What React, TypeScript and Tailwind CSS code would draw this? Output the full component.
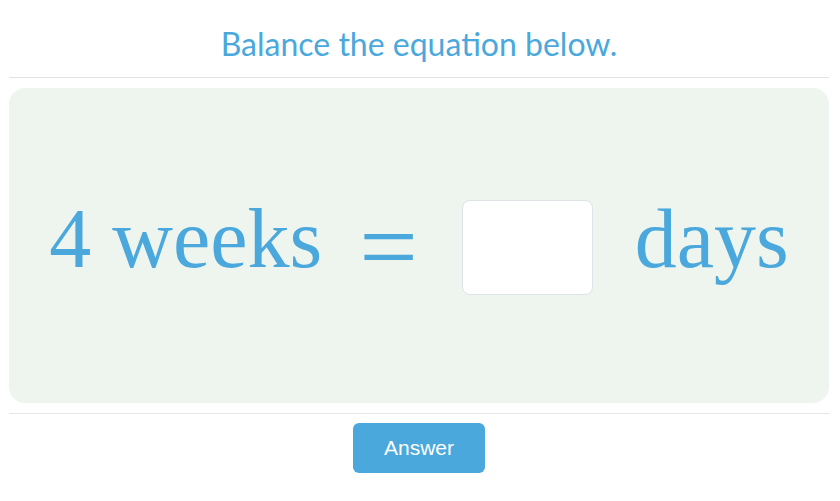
export default function App() {
  return (
    <div className="w-[840px] h-[501px] bg-white flex flex-col items-center">
      <div className="w-[820px] ml-[-2px] flex flex-col">
        <h1 className="h-[77px] pt-[26px] text-center text-[32px] leading-[36px] text-[#4aa8dc] font-['Lato',sans-serif]">
          Balance the equation below.
        </h1>
        <div className="h-px bg-[#e3e3e3]" />
        <div className="mt-[10px] h-[315px] rounded-[16px] bg-[#eef5ef] flex items-center justify-center gap-[46px] font-['Liberation_Serif',serif] text-[#4aa8dc] text-[84px] leading-none">
          <span className="pb-[14px]">4 weeks</span>
          <span className="pt-[2px] ml-[-9px] mr-[-2px] text-[104px]">=</span>
          <div className="w-[131px] h-[95px] mt-[4px] mr-[-4px] rounded-[8px] bg-white border border-[#dde3e6]" />
          <span className="pb-[14px]">days</span>
        </div>
        <div className="mt-[10px] h-px bg-[#e3e7ea]" />
        <div className="flex justify-center pt-[9px]">
          <button className="w-[132px] h-[50px] rounded-[6px] bg-[#4aa8dc] text-white text-[21px] font-['Liberation_Sans',sans-serif]">
            Answer
          </button>
        </div>
      </div>
    </div>
  );
}
